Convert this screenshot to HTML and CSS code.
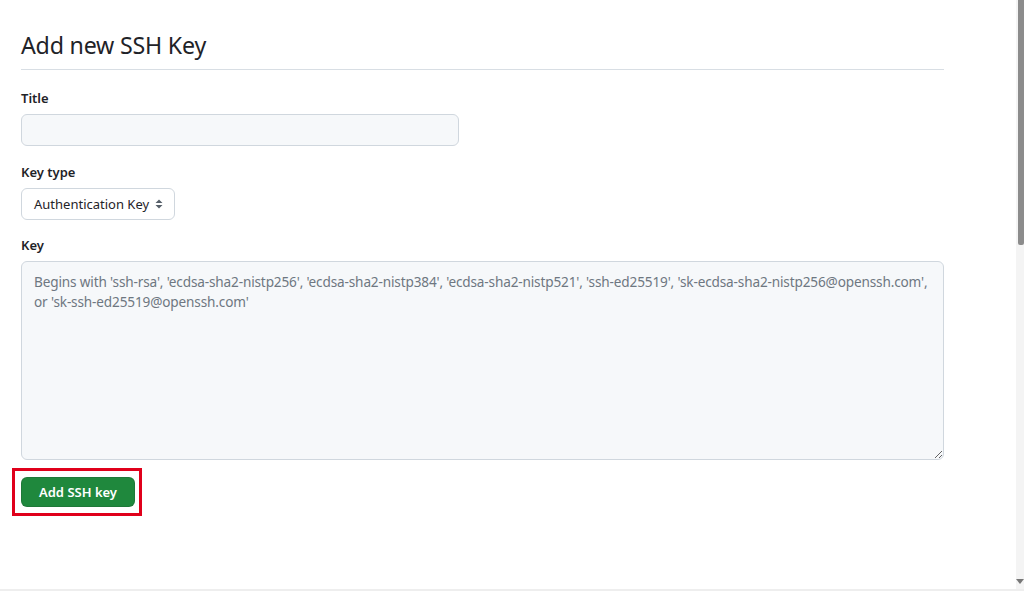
FILE: index.html
```html
<!DOCTYPE html>
<html>
<head>
<meta charset="utf-8">
<link rel="stylesheet" href="styles.css">
</head>
<body>
<main class="page">
  <h2 class="title">Add new SSH Key</h2>
  <form class="form">
    <div class="group">
      <label class="label">Title</label>
      <input class="input" type="text">
    </div>
    <div class="group">
      <label class="label">Key type</label>
      <div class="select">
        <span>Authentication Key</span>
        <svg class="updown" width="8" height="10" viewBox="0 0 8 10"><path d="M4 0.5 L7.5 4 H0.5 Z M4 9.5 L7.5 6 H0.5 Z" fill="#57606a"/></svg>
      </div>
    </div>
    <div class="group group-key">
      <label class="label">Key</label>
      <textarea class="textarea" placeholder="Begins with 'ssh-rsa', 'ecdsa-sha2-nistp256', 'ecdsa-sha2-nistp384', 'ecdsa-sha2-nistp521', 'ssh-ed25519', 'sk-ecdsa-sha2-nistp256@openssh.com',&#10;or 'sk-ssh-ed25519@openssh.com'"></textarea>
    </div>
    <div class="actions">
      <div class="highlight">
        <button class="btn" type="button">Add SSH key</button>
      </div>
    </div>
  </form>
</main>
<div class="scrollbar"><div class="thumb"></div><div class="arrow"></div></div>
<div class="bottomline"></div>
</body>
</html>
```
FILE: styles.css
```css
html, body { margin: 0; padding: 0; background: #fff; }
body {
  font-family: "Segoe UI", "Noto Sans", "Open Sans", sans-serif;
  color: #1f2328;
  overflow: hidden;
  height: 591px;
}
.page {
  width: 923px;
  padding: 30px 0 0 21px;
}
.title {
  margin: 0;
  font-size: 23.2px;
  font-weight: 400;
  line-height: 30px;
  padding-bottom: 9px;
  border-bottom: 1px solid #d8dee4;
  letter-spacing: -0.2px;
}
.form {
  display: flex;
  flex-direction: column;
  padding-top: 18px;
  gap: 16px;
}
.group { display: flex; flex-direction: column; gap: 6px; align-items: flex-start; }
.group-key { margin-top: -1px; }
.label {
  font-size: 13px;
  font-weight: 600;
  line-height: 20px;
}
.input {
  box-sizing: border-box;
  width: 438px;
  height: 32px;
  background: #f6f8fa;
  border: 1px solid #d0d7de;
  border-radius: 6px;
  margin: 0;
}
.select {
  box-sizing: border-box;
  height: 32px;
  width: 154px;
  display: flex;
  align-items: center;
  justify-content: space-between;
  padding: 0 11px 0 12px;
  border: 1px solid #d0d7de;
  border-radius: 6px;
  background: #fff;
  font-size: 13px;
  color: #1f2328;
}
.updown { display: block; }
.textarea {
  box-sizing: border-box;
  width: 923px;
  height: 199px;
  margin: 0;
  padding: 10px 12px;
  background: #f6f8fa;
  border: 1px solid #d0d7de;
  border-radius: 6px;
  font-family: "Segoe UI", "Noto Sans", sans-serif;
  font-size: 13.6px;
  line-height: 20px;
  resize: vertical;
  letter-spacing: -0.15px;
}
.textarea::placeholder { color: #6e7781; }
.actions { padding-top: 1px; display: flex; }
.highlight { position: relative; display: flex; }
.highlight::after {
  content: "";
  position: absolute;
  left: -9px; top: -9px; right: -7px; bottom: -9px;
  border: 3px solid #e0001b;
  pointer-events: none;
}
.btn {
  height: 30px;
  width: 114px;
  background: #1f883d;
  border: 1px solid rgba(31,35,40,0.15);
  border-radius: 6px;
  color: #fff;
  font-family: "Segoe UI", "Noto Sans", sans-serif;
  font-size: 13px;
  font-weight: 600;
  padding: 0;
}
.scrollbar {
  position: fixed;
  top: 0;
  right: 0;
  width: 8px;
  height: 589px;
  background: #f4f4f4;
}
.thumb {
  margin-left: 2px;
  width: 6px;
  height: 245px;
  background: #8c8c8c;
  border-radius: 0 0 2px 2px;
}
.arrow {
  position: absolute;
  bottom: 5px;
  right: 0;
  width: 0; height: 0;
  border-left: 4px solid transparent;
  border-right: 4px solid transparent;
  border-top: 5px solid #777;
}
.bottomline {
  position: fixed;
  left: 0; right: 0;
  top: 589px;
  height: 2px;
  background: #eeeeee;
}
```
